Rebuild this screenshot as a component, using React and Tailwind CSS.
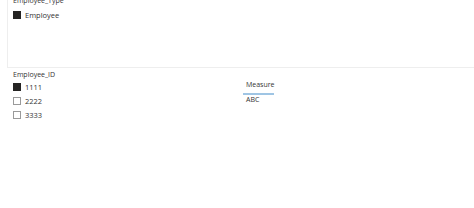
import React from 'react';

const ids = [
    { id: '1111', checked: true },
    { id: '2222', checked: false },
    { id: '3333', checked: false },
];

function Box({ checked }) {
    return (
        <span
            className={
                'inline-block w-[8px] h-[8px] shrink-0 ' +
                (checked ? 'bg-[#252423] border border-[#252423]' : 'bg-white border border-[#9a9a9a]')
            }
        />
    );
}

export default function App() {
    return (
        <div className="w-[474px] h-[208px] bg-white overflow-hidden text-[#252423]" style={{ fontFamily: '"Open Sans", "Noto Sans", sans-serif' }}>
            {/* slicer: Employee_Type */}
            <div className="ml-[7px] h-[72px] border-l border-b border-[#eeeeee] -mt-[4px] pl-[5px]">
                <div className="text-[7px] leading-[10px] text-[#333]">Employee_Type</div>
                <div className="flex items-center gap-[4px] mt-[4px]">
                    <Box checked />
                    <span className="text-[7.5px] leading-[10px] text-[#333]">Employee</span>
                </div>
            </div>

            <div className="flex mt-[2px]">
                {/* slicer: Employee_ID */}
                <div className="w-[243px] pl-[13px]">
                    <div className="text-[7px] leading-[10px] text-[#333]">Employee_ID</div>
                    <div className="flex flex-col gap-[4px] mt-[2px]">
                        {ids.map((r) => (
                            <div key={r.id} className="flex items-center gap-[4px] h-[10px]">
                                <Box checked={r.checked} />
                                <span className="text-[7.5px] leading-[10px] text-[#333]">{r.id}</span>
                            </div>
                        ))}
                    </div>
                </div>

                {/* table */}
                <div className="-mt-px">
                    <div className="w-[31px] border-b-2 border-[#9fc5e4] pl-[3px]">
                        <span className="text-[7px] leading-[10px] text-[#333]">Measure</span>
                    </div>
                    <div className="pl-[3px] text-[7px] leading-[9px] text-[#333]">ABC</div>
                </div>
            </div>
        </div>
    );
}
